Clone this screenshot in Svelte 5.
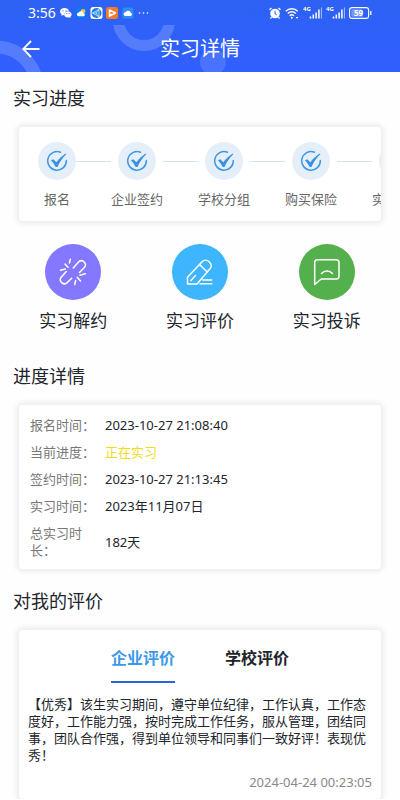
<script>
  let tab = $state('company');

  const steps = ['报名', '企业签约', '学校分组', '购买保险', '实习过程'];

  const details = [
    { label: '报名时间：', value: '2023-10-27 21:08:40' },
    { label: '当前进度：', value: '正在实习', active: true },
    { label: '签约时间：', value: '2023-10-27 21:13:45' },
    { label: '实习时间：', value: '2023年11月07日' },
    { label: '总实习时长：', value: '182天' }
  ];

  const reviews = {
    company: {
      text: '【优秀】该生实习期间，遵守单位纪律，工作认真，工作态度好，工作能力强，按时完成工作任务，服从管理，团结同事，团队合作强，得到单位领导和同事们一致好评！表现优秀！',
      time: '2024-04-24 00:23:05'
    },
    school: { text: '', time: '' }
  };

  const review = $derived(reviews[tab]);
</script>

{#snippet signal()}
  <svg class="signal" width="19" height="14" viewBox="0 0 19 14" aria-hidden="true">
    <text x="0" y="5" font-size="6" font-weight="700" fill="#fff">4G</text>
    <path d="M7.5 12.5v-2M10.3 12.5v-4M13.1 12.5v-6M15.9 12.5v-9" stroke="#fff" stroke-width="1.5" />
    <path d="M18.4 12.5v-11" stroke="#fff" stroke-opacity=".6" stroke-width="1" />
  </svg>
{/snippet}

<div class="page">
  <header class="top">
    <svg class="decor" width="240" height="72" viewBox="0 0 240 72" aria-hidden="true">
      <defs>
        <clipPath id="below-status"><rect y="25" width="240" height="47" /></clipPath>
      </defs>
      <g clip-path="url(#below-status)" fill="none" stroke="#fff" stroke-opacity=".18">
        <circle cx="144" cy="20" r="25.5" stroke-width="11" />
        <circle cx="-4" cy="88" r="41" stroke-width="13" />
      </g>
      <circle cx="213" cy="62" r="13" fill="#fff" fill-opacity=".12" />
    </svg>

    <div class="status">
      <span class="clock">3:56</span>
      <svg width="90" height="12" viewBox="0 0 90 12" aria-hidden="true">
        <path d="M4.5 1C2 1 0 2.600 0 4.600c0 1.200.7 2.200 1.700 2.800L1.300 8.900l1.700-.9c.5.1 1 .2 1.500.2C4.100 5.500 6.300 3.600 9 3.700 8.500 2.100 6.700 1 4.500 1z" fill="#fff" />
        <path d="M7.900 4.300c-2.100 0-3.700 1.400-3.700 3.100s1.600 3.100 3.700 3.100c.4 0 .8-.1 1.200-.2l1.400.8-.3-1.300c.9-.6 1.400-1.400 1.400-2.400 0-1.700-1.600-3.100-3.700-3.100z" fill="#fff" />
        <g fill="#2f63f2"><circle cx="3" cy="3.800" r=".6" /><circle cx="6" cy="3.800" r=".6" /><circle cx="6.700" cy="6.500" r=".5" /><circle cx="9.200" cy="6.500" r=".5" /></g>
        <rect x="15.500" y=".5" width="11" height="11" rx="2.500" fill="#0c78f5" />
        <circle cx="23" cy="4.200" r="2.200" fill="#ffc531" />
        <path d="M18.800 9.200a1.900 1.900 0 0 1 0-3.800 2.600 2.600 0 0 1 4.600.7 1.600 1.600 0 0 1 .4 3.100z" fill="#fff" />
        <rect x="30.500" y="0" width="12" height="12" rx="2.500" fill="#fff" />
        <circle cx="36.500" cy="6" r="5" fill="#1b7fe0" />
        <path d="M32.500 6l6.500-3.700v7.400zM36 6l3-3.700M36 6l3 3.700M32.500 6h5" fill="none" stroke="#cfe6ff" stroke-width=".8" />
        <rect x="46" y="0" width="12" height="12" rx="2.500" fill="#f47b2c" />
        <path d="M49.500 6.500V3l6 3-6 3.200V7.500H52" fill="none" stroke="#fff" stroke-width="1.500" stroke-linejoin="round" />
        <rect x="62.500" y=".5" width="11" height="11" rx="2.500" fill="#2f8cf5" />
        <path d="M65.500 9a1.900 1.900 0 0 1 0-3.800 2.800 2.800 0 0 1 5.200.5A1.700 1.700 0 0 1 70.700 9z" fill="#fff" />
        <g fill="#fff"><circle cx="79.500" cy="6" r=".8" /><circle cx="83.500" cy="6" r=".8" /><circle cx="87.500" cy="6" r=".8" /></g>
      </svg>

      <div class="system">
        <svg width="12" height="12" viewBox="0 0 12 12" aria-hidden="true">
          <circle cx="6" cy="6.500" r="4.800" fill="#fff" />
          <path d="M.5 2.800l2-1.800M11.500 2.800l-2-1.800M2.500 10.200l-1 1.300M9.500 10.200l1 1.300" stroke="#fff" stroke-width="1.300" />
          <path d="M6 3.800v3l1.800 1" fill="none" stroke="#2f63f2" stroke-width="1" />
        </svg>
        <svg width="14" height="12" viewBox="0 0 14 12" aria-hidden="true">
          <path d="M.8 4.200a8.500 8.500 0 0 1 12 0M2.800 6.500a5.600 5.600 0 0 1 8 0M4.700 8.700a3 3 0 0 1 4.200 0" fill="none" stroke="#fff" stroke-width="1.400" />
          <circle cx="6.800" cy="10.700" r="1" fill="#fff" />
          <path d="M11 10.700h2" stroke="#fff" stroke-width="1.200" />
        </svg>
        {@render signal()}
        {@render signal()}
        <svg class="battery" width="23" height="12" viewBox="0 0 23 12" aria-hidden="true">
          <rect x=".6" y=".6" width="19" height="10.800" rx="2.500" fill="none" stroke="#fff" stroke-width="1.100" />
          <rect x="2.300" y="2.300" width="11.500" height="7.400" rx="1" fill="#fff" fill-opacity=".35" />
          <path d="M21.800 4v4" stroke="#fff" stroke-width="1.300" />
          <text x="9.500" y="8.800" font-size="8" font-weight="700" text-anchor="middle" fill="#fff">59</text>
        </svg>
      </div>
    </div>

    <div class="nav">
      <button class="back" aria-label="返回">
        <svg width="18" height="18" viewBox="0 0 18 18" aria-hidden="true">
          <path d="M17.500 9H1.500M9 1L1.200 9 9 17" fill="none" stroke="#fff" stroke-width="1.800" />
        </svg>
      </button>
      <h1>实习详情</h1>
    </div>
  </header>

  <main>
    <h2>实习进度</h2>
    <section class="card">
      <ol class="steps">
        {#each steps as step, i}
          {#if i > 0}<li class="line" aria-hidden="true"></li>{/if}
          <li class="step">
            <span class="dot">
              <svg width="22" height="22" viewBox="0 0 22 22" aria-hidden="true">
                <path d="M14.500 2.300A9.300 9.300 0 1 0 20.300 10.500" fill="none" stroke="#3f97e6" stroke-width="1.500" stroke-linecap="round" />
                <path d="M5 10.300l2.300-1.100 3 3.100c2.600-3.500 5.600-6.300 9.400-8.700l.6.700c-3.700 3.500-6.500 7.500-8.800 12.700H9.700C8.500 14.500 6.900 12.300 5 10.300z" fill="#3b92e3" />
              </svg>
            </span>
            <span>{step}</span>
          </li>
        {/each}
      </ol>
    </section>

    <nav class="actions">
      <button>
        <span class="round purple">
          <svg width="28" height="28" viewBox="0 0 28 28" aria-hidden="true">
            <path d="M14.300 10l5-5.700c1.800-2 4-2 5.700-.5 1.800 1.500 2 3.700.3 5.700L20.500 14.500M7.300 13.500l-4.700 5.200c-1.800 2-1.600 4.300.1 5.900 1.800 1.700 4 1.600 5.800-.3l4.200-4.100" />
            <path d="M11.300 1.300l-.9 3.700M6 6l3 3.300M1.500 12.300l4.800-1.200M21 17.200l5.300-1.500M18.200 19.300l3.300 3.700M16.600 22.500l-.9 4" />
          </svg>
        </span>
        实习解约
      </button>
      <button>
        <span class="round blue">
          <svg width="28" height="28" viewBox="0 0 28 28" aria-hidden="true">
            <path d="M1.500 26v-6.700L16.300 3.600c1.800-1.900 4.600-1.900 6.600-.1 2.400 2.200 3 5 1.300 7L11 26zM13.500 6.500l7.200 7M4.900 22.500l4.600-4.900M16.700 22h9M14 25.700h11.700" />
          </svg>
        </span>
        实习评价
      </button>
      <button>
        <span class="round green">
          <svg width="28" height="28" viewBox="0 0 28 28" aria-hidden="true">
            <path d="M1.700 26.500V4.500c0-1.800 1-2.800 2.800-2.800h18.700c1.800 0 2.800 1 2.800 2.800v13.700c0 1.800-1 2.800-2.800 2.800H8.200zM8.500 15.500c3-3.300 8-3.300 11 0" />
          </svg>
        </span>
        实习投诉
      </button>
    </nav>

    <h2>进度详情</h2>
    <section class="card">
      <dl class="details">
        {#each details as row}
          <dt>{row.label}</dt>
          <dd class:active={row.active}>{row.value}</dd>
        {/each}
      </dl>
    </section>

    <h2>对我的评价</h2>
    <section class="card review">
      <div class="tabs" role="tablist">
        <button role="tab" aria-selected={tab === 'company'} onclick={() => (tab = 'company')}>企业评价</button>
        <button role="tab" aria-selected={tab === 'school'} onclick={() => (tab = 'school')}>学校评价</button>
      </div>
      <p>{review.text}</p>
      <time>{review.time}</time>
    </section>
  </main>
</div>

<style>
  :global(body) {
    margin: 0;
    background: #fefefe;
  }

  .page {
    font-family: "Noto Sans", "Noto Sans CJK SC", sans-serif;
    font-size: 13px;
    line-height: 17px;
    color: #22242c;
  }

  button {
    padding: 0;
    border: 0;
    background: none;
    font: inherit;
    color: inherit;
    cursor: pointer;
  }

  svg {
    display: block;
  }

  .top {
    position: relative;
    background: linear-gradient(#2d62f4, #315fff);
    color: #fff;
  }

  .decor {
    position: absolute;
    top: 0;
    left: 0;
  }

  .status {
    position: relative;
    display: flex;
    align-items: center;
    gap: 4px;
    height: 25px;
    padding: 0 28px;
  }

  .clock {
    font-size: 14px;
  }

  .system {
    display: flex;
    align-items: center;
    gap: 4px;
    margin-left: auto;
  }

  .nav {
    position: relative;
    display: grid;
    grid-template-columns: 40px 1fr 40px;
    align-items: center;
    height: 47px;
  }

  .back {
    justify-self: end;
  }

  h1 {
    margin: 0;
    font-size: 20px;
    line-height: 28px;
    font-weight: 400;
    text-align: center;
  }

  main {
    padding: 14px 19px 0;
  }

  h2 {
    margin: 0 0 17px -6px;
    font-size: 18px;
    line-height: 24px;
    font-weight: 400;
  }

  .card {
    border-radius: 4px;
    background: #fff;
    box-shadow: 0 0 5px 3px #eee;
  }

  .steps {
    display: flex;
    margin: 0;
    padding: 15px 0 13px 19px;
    list-style: none;
    overflow-x: auto;
    scrollbar-width: none;
    color: #666;
  }

  .step {
    display: flex;
    flex: none;
    flex-direction: column;
    align-items: center;
    gap: 11px;
  }

  .dot {
    display: grid;
    place-items: center;
    width: 38px;
    height: 38px;
    border-radius: 50%;
    background: #e5eff9;
  }

  .line {
    flex: none;
    width: 35px;
    height: 1px;
    margin-top: 19px;
    background: #d5e4ee;
  }

  .actions {
    display: grid;
    grid-template-columns: repeat(3, 1fr);
    margin: 23px -9px 31px;
  }

  .actions button {
    display: flex;
    flex-direction: column;
    align-items: center;
    gap: 9px;
    font-size: 17px;
    line-height: 24px;
  }

  .round {
    display: grid;
    place-items: center;
    width: 56px;
    height: 56px;
    border-radius: 50%;
  }

  .round svg {
    fill: none;
    stroke: #fff;
    stroke-width: 1.5;
    stroke-linecap: round;
    stroke-linejoin: round;
  }

  .purple { background: #8378ff; }
  .blue { background: #3db5ff; }
  .green { background: #54b04d; }

  .details {
    display: grid;
    grid-template-columns: 65px 1fr;
    gap: 10px;
    align-items: center;
    margin: 0 0 20px;
    padding: 12px 11px 10px;
  }

  dt {
    color: #777;
  }

  dd {
    margin: 0;
  }

  .active {
    color: #f0dc1e;
  }

  .review {
    padding: 16px 9px 8px;
  }

  .tabs {
    display: flex;
    justify-content: center;
    gap: 50px;
    margin-bottom: 13px;
  }

  .tabs button {
    padding-bottom: 11px;
    border-bottom: 2px solid transparent;
    font-size: 16px;
    line-height: 24px;
    font-weight: 700;
  }

  .tabs button[aria-selected='true'] {
    border-color: #2f63dc;
    color: #3d98e8;
  }

  p {
    margin: 0 0 10px;
  }

  time {
    display: block;
    text-align: right;
    color: #888;
  }
</style>
